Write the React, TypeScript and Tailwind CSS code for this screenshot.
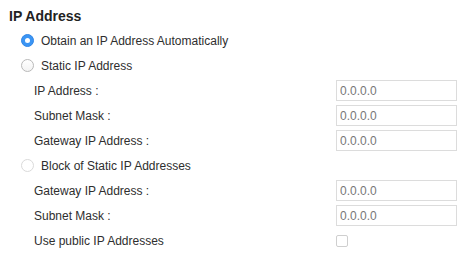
import { useState } from "react";

type Mode = "auto" | "static" | "block";

function Radio({ checked, faded, onClick }: { checked: boolean; faded?: boolean; onClick: () => void }) {
  return (
    <button
      type="button"
      onClick={onClick}
      className={`flex items-center justify-center w-[13px] h-[13px] rounded-full shrink-0 ${
        checked
          ? "bg-[#3b95f4] border border-[#3186e6]"
          : faded
          ? "bg-white border border-[#dadada]"
          : "bg-gradient-to-b from-white to-[#f3f3f3] border border-[#b9b9b9]"
      }`}
    >
      {checked && <span className="w-[5px] h-[5px] rounded-full bg-white" />}
    </button>
  );
}

function Field({ label, value }: { label: string; value: string }) {
  return (
    <div className="flex items-center h-[25px]">
      <span className="w-[302px]">{label}</span>
      <input
        readOnly
        value={value}
        className="w-[121px] h-[21px] border border-[#dcdcdc] bg-white px-[3px] text-[12px] text-[#777] outline-none"
      />
    </div>
  );
}

export default function App() {
  const [mode, setMode] = useState<Mode>("auto");
  const [usePublic, setUsePublic] = useState(false);

  return (
    <div
      className="w-[465px] h-[265px] bg-white text-[#2e2e2e] text-[12px] pt-[8px]"
      style={{ fontFamily: '"Liberation Sans", Arial, sans-serif' }}
    >
      <h1 className="pl-[9px] text-[14px] leading-[17px] font-bold text-[#222] mb-[3px]">IP Address</h1>

      <div className="flex items-center h-[25px] pl-[21px] gap-[7px]">
        <Radio checked={mode === "auto"} onClick={() => setMode("auto")} />
        <span>Obtain an IP Address Automatically</span>
      </div>

      <div className="flex items-center h-[25px] pl-[21px] gap-[7px]">
        <Radio checked={mode === "static"} onClick={() => setMode("static")} />
        <span>Static IP Address</span>
      </div>

      {/* static fields */}
      <div className="pl-[34px]">
        <Field label="IP Address :" value="0.0.0.0" />
        <Field label="Subnet Mask :" value="0.0.0.0" />
        <Field label="Gateway IP Address :" value="0.0.0.0" />
      </div>

      <div className="flex items-center h-[25px] pl-[21px] gap-[7px]">
        <Radio checked={mode === "block"} faded onClick={() => setMode("block")} />
        <span>Block of Static IP Addresses</span>
      </div>

      {/* block fields */}
      <div className="pl-[34px]">
        <Field label="Gateway IP Address :" value="0.0.0.0" />
        <Field label="Subnet Mask :" value="0.0.0.0" />
        <div className="flex items-center h-[25px]">
          <span className="w-[302px]">Use public IP Addresses</span>
          <button
            type="button"
            onClick={() => setUsePublic(!usePublic)}
            className="w-[12px] h-[12px] border border-[#cfcfcf] rounded-[2px] bg-white"
          >
            {usePublic && <span className="block w-full h-full bg-[#3b95f4]" />}
          </button>
        </div>
      </div>
    </div>
  );
}
